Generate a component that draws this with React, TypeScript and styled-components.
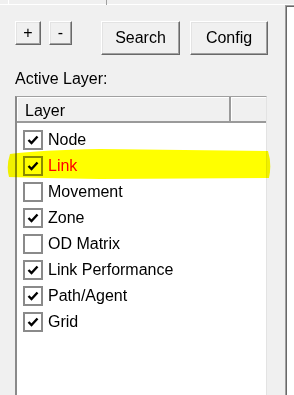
import React from 'react';
import styled, { createGlobalStyle } from 'styled-components';

const GlobalStyle = createGlobalStyle`
  body {
    margin: 0;
    background: #f0f0f0;
    font-family: "Liberation Sans", Arial, sans-serif;
  }
`;

interface LayerItem {
  name: string;
  checked: boolean;
  active?: boolean;
}

const layers: LayerItem[] = [
  { name: 'Node', checked: true },
  { name: 'Link', checked: true, active: true },
  { name: 'Movement', checked: false },
  { name: 'Zone', checked: true },
  { name: 'OD Matrix', checked: false },
  { name: 'Link Performance', checked: true },
  { name: 'Path/Agent', checked: true },
  { name: 'Grid', checked: true },
];

const Root = styled.div`
  position: relative;
  width: 294px;
  height: 395px;
  overflow: hidden;
  background: #f0f0f0;
  color: #000;
  font-size: 16px;
`;

const TabStrip = styled.div`
  height: 4px;
  display: flex;
  padding-left: 8px;
  border-bottom: 1px solid #ffffff;
`;

const Tab = styled.div`
  width: 97px;
  height: 5px;
  overflow: hidden;
  border-left: 1px solid #ffffff;
  border-right: 1px solid #a0a0a0;
  display: flex;
  align-items: flex-end;
  justify-content: center;
`;

const TabLabel = styled.span`
  line-height: 18px;
  margin-bottom: 1px;
  padding-left: 4px;
`;

const Body = styled.div`
  display: flex;
  height: 390px;
`;

const Panel = styled.div`
  width: 285px;
  padding-left: 15px;
  box-sizing: border-box;
  overflow: hidden;
`;

const MapPane = styled.div`
  flex: 1;
  background: #ffffff;
  border-left: 1px solid #a0a0a0;
  border-top: 1px solid #a0a0a0;
  box-shadow: inset 1px 1px 0 #696969;
`;

const ButtonRow = styled.div`
  display: flex;
  align-items: flex-start;
  margin-top: 16px;
`;

interface ButtonProps {
  $w: number;
  $h: number;
  $gap: number;
}

const Button = styled.div<ButtonProps>`
  width: ${(p) => p.$w}px;
  height: ${(p) => p.$h}px;
  margin-left: ${(p) => p.$gap}px;
  box-sizing: border-box;
  background: #f0f0f0;
  border-top: 1px solid #ffffff;
  border-left: 1px solid #ffffff;
  border-right: 1px solid #696969;
  border-bottom: 1px solid #696969;
  box-shadow: inset -1px -1px 0 #a0a0a0, inset 1px 1px 0 #e3e3e3;
  display: flex;
  align-items: center;
  justify-content: center;
  line-height: 18px;
`;

const Label = styled.div`
  margin-top: 15px;
  line-height: 18px;
`;

const ListBox = styled.div`
  margin-top: 8px;
  width: 252px;
  height: 320px;
  box-sizing: border-box;
  background: #ffffff;
  border-top: 1px solid #a0a0a0;
  border-left: 2px solid #8a8a8a;
  border-right: 1px solid #e3e3e3;
`;

const Header = styled.div`
  display: flex;
  height: 26px;
  background: #f0f0f0;
  border-bottom: 2px solid #9a9a9a;
  box-sizing: border-box;
`;

interface HeadCellProps {
  $w?: number;
}

const HeadCell = styled.div<HeadCellProps>`
  ${(p) => (p.$w ? `width: ${p.$w}px;` : 'flex: 1;')}
  box-sizing: border-box;
  padding: 5px 0 0 8px;
  line-height: 18px;
  border-right: 2px solid #9a9a9a;
  box-shadow: inset 1px 1px 0 #ffffff;
  &:last-child {
    border-right: none;
  }
`;

const Rows = styled.div`
  padding-top: 4px;
`;

const Row = styled.div`
  display: flex;
  align-items: center;
  height: 26px;
  padding-left: 6px;
`;

const Box = styled.div`
  width: 20px;
  height: 20px;
  box-sizing: border-box;
  border: 2px solid #8a8a8a;
  background: #ffffff;
  display: flex;
  align-items: center;
  justify-content: center;
  margin-right: 5px;
`;

interface NameProps {
  $active?: boolean;
}

const Name = styled.span<NameProps>`
  line-height: 26px;
  color: ${(p) => (p.$active ? '#ff0000' : '#000000')};
`;

const Marker = styled.svg`
  position: absolute;
  left: 0;
  top: 0;
  pointer-events: none;
  mix-blend-mode: multiply;
`;

function CheckMark() {
  return (
    <svg width="12" height="10" viewBox="0 0 12 10">
      <path d="M1.5 5 L4.5 8 L10.5 1.5" fill="none" stroke="#000" strokeWidth={2.4} />
    </svg>
  );
}

function App() {
  return (
    <Root>
      <GlobalStyle />
      <TabStrip>
        <Tab>
          <TabLabel>Network</TabLabel>
        </Tab>
      </TabStrip>
      <Body>
        <Panel>
          <ButtonRow>
            <Button $w={26} $h={24} $gap={0}>+</Button>
            <Button $w={23} $h={24} $gap={8}>-</Button>
            <Button $w={79} $h={34} $gap={29}>Search</Button>
            <Button $w={78} $h={34} $gap={10}>Config</Button>
          </ButtonRow>
          <Label>Active Layer:</Label>
          <ListBox>
            <Header>
              <HeadCell $w={214}>Layer</HeadCell>
              <HeadCell />
            </Header>
            <Rows>
              {layers.map((l) => (
                <Row key={l.name}>
                  <Box>{l.checked && <CheckMark />}</Box>
                  <Name $active={l.active}>{l.name}</Name>
                </Row>
              ))}
            </Rows>
          </ListBox>
        </Panel>
        <MapPane />
      </Body>
      <Marker width="294" height="395" viewBox="0 0 294 395">
        <path
          d="M10 154 Q40 150 100 149 L268 151 Q272 164 269 178 L100 179 Q40 178 9 177 Q6 166 10 154 Z"
          fill="#ffff00"
        />
      </Marker>
    </Root>
  );
}

export default App;
